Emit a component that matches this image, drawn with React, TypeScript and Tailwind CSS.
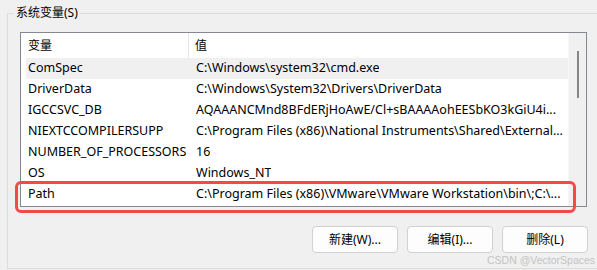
import React from "react";

const rows: [string, string][] = [
  ["ComSpec", "C:\\Windows\\system32\\cmd.exe"],
  ["DriverData", "C:\\Windows\\System32\\Drivers\\DriverData"],
  ["IGCCSVC_DB", "AQAAANCMnd8BFdERjHoAwE/Cl+sBAAAAohEESbKO3kGiU4i..."],
  ["NIEXTCCOMPILERSUPP", "C:\\Program Files (x86)\\National Instruments\\Shared\\External..."],
  ["NUMBER_OF_PROCESSORS", "16"],
  ["OS", "Windows_NT"],
  ["Path", "C:\\Program Files (x86)\\VMware\\VMware Workstation\\bin\\;C:\\..."],
];

const font = { fontFamily: '"Noto Sans", "Noto Sans CJK SC", sans-serif' };

export default function App() {
  return (
    <div
      className="relative w-[597px] h-[270px] overflow-hidden bg-[#f0f0f0] text-[12px] text-black"
      style={font}
    >
      <div className="relative ml-[7px] mt-[13px] w-[600px] h-[256px] border-l border-t border-b border-[#dcdcdc] pl-[12px] pt-[18px]">
        <div className="absolute left-[6px] top-[-10px] bg-[#f0f0f0] px-[2px] leading-[18px] text-[12px]">
          系统变量(S)
        </div>
        <div className="flex w-[567px] h-[175px] border border-[#848991] bg-white">
          <div className="flex flex-col w-[547px] text-[12.5px]">
            <div className="flex h-[25px] items-center text-[12px]">
              <div className="w-[168px] h-full flex items-center pl-[7px] border-r border-[#e5e5e5]">变量</div>
              <div className="pl-[6px]">值</div>
            </div>
            {rows.map(([k, v], i) => (
              <div key={k} className="flex h-[21px] items-center pl-[5px]">
                <div
                  className={`flex h-full w-full items-center ${i === 0 ? "bg-[#f0f0f0]" : ""}`}
                >
                  <div className="w-[164px] pl-[2px] whitespace-nowrap overflow-hidden">{k}</div>
                  <div className="pl-[6px] whitespace-nowrap overflow-hidden">{v}</div>
                </div>
              </div>
            ))}
          </div>
          <div className="relative w-[18px] h-full bg-[#f0f0f0] border-l border-[#f7f7f7]">
            <div className="absolute left-[8px] top-[18px] w-[2px] h-[47px] bg-[#858585]" />
          </div>
        </div>
        <div className="flex gap-[9px] mt-[19px] ml-[292px]">
          {["新建(W)...", "编辑(I)...", "删除(L)"].map((t) => (
            <button
              key={t}
              className="w-[86px] h-[27px] rounded-[4px] border border-[#d1d1d1] bg-[#fdfdfd] text-[12px] flex items-center justify-center"
            >
              {t}
            </button>
          ))}
        </div>
      </div>
      <div className="absolute left-[15px] top-[181px] w-[561px] h-[32px] rounded-[6px] border-[3px] border-[#f24949]" />
      <div
        className="absolute left-[487px] top-[254px] whitespace-nowrap text-[10.5px] leading-[13px] text-[#c4c4c4]"
        style={{ fontFamily: '"Liberation Sans", Arial, sans-serif' }}
      >
        CSDN @VectorSpaces
      </div>
    </div>
  );
}
